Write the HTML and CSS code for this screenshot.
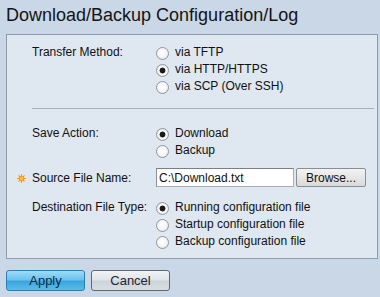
FILE: index.html
```html
<!DOCTYPE html>
<html lang="en">
<head>
  <meta charset="UTF-8">
  <title>Download/Backup Configuration/Log</title>
  <link rel="stylesheet" href="styles.css">
</head>
<body>
  <h1 class="page-title">Download/Backup Configuration/Log</h1>
  <div class="panel">
    <div class="field">
      <div class="field-label"><span class="mark"></span>Transfer Method:</div>
      <div class="options">
        <label class="opt"><input type="radio" name="method">via TFTP</label>
        <label class="opt"><input type="radio" name="method" checked>via HTTP/HTTPS</label>
        <label class="opt"><input type="radio" name="method">via SCP (Over SSH)</label>
      </div>
    </div>

    <div class="separator"></div>

    <div class="field">
      <div class="field-label"><span class="mark"></span>Save Action:</div>
      <div class="options">
        <label class="opt"><input type="radio" name="action" checked>Download</label>
        <label class="opt"><input type="radio" name="action">Backup</label>
      </div>
    </div>

    <div class="field file-row">
      <div class="field-label">
        <span class="mark">
          <svg width="9" height="9" viewBox="0 0 10 10">
            <g stroke="#f29a1a" stroke-width="1.2" stroke-linecap="round">
              <line x1="5" y1="0.6" x2="5" y2="9.4"/>
              <line x1="0.6" y1="5" x2="9.4" y2="5"/>
              <line x1="1.9" y1="1.9" x2="8.1" y2="8.1"/>
              <line x1="8.1" y1="1.9" x2="1.9" y2="8.1"/>
            </g>
            <circle cx="5" cy="5" r="2.6" fill="#f7c23a" stroke="#e98a12" stroke-width="0.8"/>
          </svg>
        </span>Source File Name:
      </div>
      <div class="file-controls">
        <input type="text" class="file-input" value="C:\Download.txt">
        <button class="browse">Browse...</button>
      </div>
    </div>

    <div class="field dest-row">
      <div class="field-label"><span class="mark"></span>Destination File Type:</div>
      <div class="options">
        <label class="opt"><input type="radio" name="dest" checked>Running configuration file</label>
        <label class="opt"><input type="radio" name="dest">Startup configuration file</label>
        <label class="opt"><input type="radio" name="dest">Backup configuration file</label>
      </div>
    </div>
  </div>

  <div class="actions">
    <button class="btn apply">Apply</button>
    <button class="btn cancel">Cancel</button>
  </div>
</body>
</html>
```

FILE: styles.css
```css
body {
  margin: 0;
  font-family: "Liberation Sans", Arial, sans-serif;
  font-size: 12px;
  color: #111;
  background: #c9d7e6;
  height: 297px;
  overflow: hidden;
}
.page-title {
  margin: 4px 0 8px 6px;
  font-size: 18px;
  font-weight: normal;
  line-height: 22px;
  color: #141414;
}
.panel {
  margin: 0 2px 0 6px;
  padding: 9px 0 8px 10px;
  background: #dfe7f0;
  border: 1px solid #8e9cab;
}
.field {
  display: grid;
  grid-template-columns: 139px 1fr;
  line-height: 17px;
}
.field-label {
  display: flex;
  align-items: center;
  height: 17px;
}
.mark {
  width: 15px;
  height: 17px;
  display: flex;
  align-items: center;
}
.options {
  display: flex;
  flex-direction: column;
}
.opt {
  display: flex;
  align-items: flex-start;
  height: 17px;
}
.opt input {
  appearance: none;
  -webkit-appearance: none;
  width: 13px;
  height: 13px;
  margin: 3px 6px 0 0;
  border: 1px solid #8f969d;
  border-radius: 50%;
  background: radial-gradient(circle at 45% 40%, #ffffff 0%, #f4f4f4 55%, #d8dade 100%);
  box-sizing: border-box;
}
.opt input:checked {
  background: radial-gradient(circle, #1a1a1a 0, #1a1a1a 2.6px, #ffffff 3.3px, #f1f1f1 60%, #d8dade 100%);
}
.separator {
  height: 1px;
  background: #a3afbb;
  margin: 13px 3px 16px 15px;
}
.file-row {
  margin-top: 9px;
}
.file-row .field-label {
  height: 20px;
}
.file-controls {
  display: flex;
  gap: 2px;
}
.file-input {
  width: 138px;
  height: 19px;
  margin: 0;
  padding: 0 2px;
  box-sizing: border-box;
  border: 1px solid #a9adb3;
  border-top-color: #7b7f85;
  border-left-color: #8c9096;
  background: #fff;
  font-family: "Liberation Sans", Arial, sans-serif;
  font-size: 12px;
  color: #111;
}
.browse {
  width: 70px;
  height: 19px;
  padding: 0;
  border: 1px solid #8a8d91;
  border-radius: 2px;
  background: linear-gradient(#f3f3f3, #e6e6e6 50%, #d9d9d9);
  font-family: "Liberation Sans", Arial, sans-serif;
  font-size: 12px;
  color: #111;
}
.dest-row {
  margin-top: 11px;
}
.actions {
  display: flex;
  gap: 6px;
  margin: 11px 0 0 6px;
}
.btn {
  width: 79px;
  height: 21px;
  padding: 0;
  border-radius: 3px;
  font-family: "Liberation Sans", Arial, sans-serif;
  font-size: 13px;
  color: #1b2633;
}
.btn.apply {
  border: 1px solid #2d7fb0;
  background: linear-gradient(#9edcf7, #6cc3ef 45%, #3ba6de 55%, #5bbcea);
  color: #0f2c45;
}
.btn.cancel {
  border: 1px solid #5c6a78;
  background: linear-gradient(#f1f3f5, #e1e5e9 45%, #cdd3d9 55%, #d9dee3);
}
```
